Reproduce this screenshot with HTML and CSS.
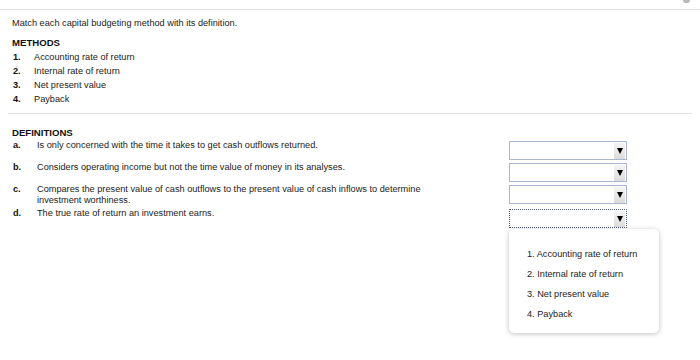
FILE: index.html
```html
<!DOCTYPE html>
<html lang="en">
<head>
    <meta charset="UTF-8">
    <title>Match capital budgeting methods</title>
    <link rel="stylesheet" href="styles.css">
</head>
<body>
<div class="topbar">
    <span class="top-icon"></span>
</div>

<div class="question">
    <p class="intro">Match each capital budgeting method with its definition.</p>

    <h3 class="heading">METHODS</h3>
    <ol class="methods">
        <li><span class="num">1.</span>Accounting rate of return</li>
        <li><span class="num">2.</span>Internal rate of return</li>
        <li><span class="num">3.</span>Net present value</li>
        <li><span class="num">4.</span>Payback</li>
    </ol>

    <div class="divider"></div>

    <h3 class="heading heading-defs">DEFINITIONS</h3>
    <div class="definitions">
        <span class="num">a.</span>
        <span class="def-text">Is only concerned with the time it takes to get cash outflows returned.</span>
        <div class="pick-cell">
            <div class="pick"><span class="arrow"></span></div>
        </div>

        <span class="num">b.</span>
        <span class="def-text">Considers operating income but not the time value of money in its analyses.</span>
        <div class="pick-cell">
            <div class="pick"><span class="arrow"></span></div>
        </div>

        <span class="num">c.</span>
        <span class="def-text">Compares the present value of cash outflows to the present value of cash inflows to determine investment worthiness.</span>
        <div class="pick-cell">
            <div class="pick"><span class="arrow"></span></div>
        </div>

        <span class="num">d.</span>
        <span class="def-text">The true rate of return an investment earns.</span>
        <div class="pick-cell">
            <div class="pick pick-open"><span class="arrow"></span></div>
            <div class="menu">
                <div class="menu-item">1. Accounting rate of return</div>
                <div class="menu-item">2. Internal rate of return</div>
                <div class="menu-item">3. Net present value</div>
                <div class="menu-item">4. Payback</div>
            </div>
        </div>
    </div>
</div>
</body>
</html>
```

FILE: styles.css
```css
html, body {
    min-height: 360px;
}

body {
    margin: 0;
    font-family: "Liberation Sans", Arial, sans-serif;
    font-size: 9.2px;
    color: #222;
    background: #fff;
}

.topbar {
    height: 9px;
    border-bottom: 1px solid #e2e2e8;
    display: flex;
    justify-content: flex-end;
    padding-right: 10px;
}

.top-icon {
    width: 7px;
    height: 3px;
    background: #b8b8b8;
    border-radius: 0 0 3px 3px;
}

.question {
    padding: 0 12px 140px;
}

.intro {
    margin: 6px 0 0;
    line-height: 14px;
}

.heading {
    margin: 6px 0 0;
    font-size: 9.6px;
    line-height: 14px;
    font-weight: bold;
    color: #111;
}

.methods {
    list-style: none;
    margin: 0;
    padding: 0;
}

.methods li {
    display: flex;
    line-height: 14px;
}

.methods .num {
    width: 21px;
    padding-left: 1px;
}

.num {
    font-weight: bold;
    color: #111;
}

.divider {
    margin: 7px -4px 0;
    border-top: 1px solid #e2e2e8;
}

.heading-defs {
    margin-top: 12px;
}

.definitions {
    display: grid;
    grid-template-columns: 25px 472px 118px;
    row-gap: 2px;
    line-height: 11px;
}

.definitions .num {
    padding-left: 1px;
    min-height: 20px;
}

.def-text {
    max-width: 392px;
}

.pick-cell {
    position: relative;
    padding-top: 1px;
}

.pick {
    height: 17px;
    border: 1px solid #a9b6d3;
    display: flex;
    justify-content: flex-end;
    align-items: center;
    padding-right: 1px;
}

.pick-open {
    border: 1px dotted #4f5a74;
}

.arrow {
    width: 11px;
    height: 16px;
    background: linear-gradient(#f4f4f4, #dcdcdc);
    display: flex;
    justify-content: center;
    align-items: center;
}

.arrow::after {
    content: "";
    border-left: 3px solid transparent;
    border-right: 3px solid transparent;
    border-top: 6px solid #000;
}

.menu {
    position: absolute;
    left: 0;
    top: 21px;
    z-index: 2;
    width: 150px;
    padding: 15px 0 9px 18px;
    box-sizing: border-box;
    background: #fff;
    border-radius: 5px;
    box-shadow: 0 1px 5px rgba(0, 0, 0, 0.25);
    color: #222;
}

.menu-item {
    line-height: 20px;
}
```
